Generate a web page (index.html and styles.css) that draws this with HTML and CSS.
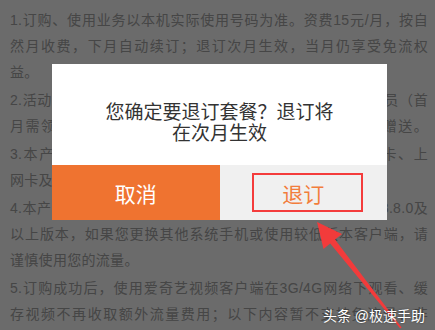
FILE: index.html
```html
<!DOCTYPE html>
<html lang="zh-CN">
<head>
  <meta charset="UTF-8">
  <meta name="viewport" content="width=device-width, initial-scale=1.0">
  <title>退订套餐</title>
  <link rel="stylesheet" href="styles.css">
</head>
<body>
  <div class="terms">
    <p>
      <span>1.订购、使用业务以本机实际使用号码为准。资费15元/月，按自</span>
      <span>然月收费，下月自动续订；退订次月生效，当月仍享受免流权</span>
      <span class="end">益。</span>
    </p>
    <p>
      <span>2.活动期间，新用户订购成功后即可获赠爱奇艺黄金VIP会员（首</span>
      <span>月需领取），激活后次月起每月1日系统将自动为您充值赠送。</span>
    </p>
    <p>
      <span>3.本产品仅限中国联通手机用户订购，不支持无线上网卡、上</span>
      <span class="end">网卡及物联网卡用户订购。</span>
    </p>
    <p>
      <span>4.本产品仅适用于安卓系统及iOS系统的爱奇艺视频客户端8.8.0及</span>
      <span>以上版本，如果您更换其他系统手机或使用较低版本客户端，请</span>
      <span class="end">谨慎使用您的流量。</span>
    </p>
    <p>
      <span>5.订购成功后，使用爱奇艺视频客户端在3G/4G网络下观看、缓</span>
      <span>存视频不再收取额外流量费用；以下内容暂不支持免流量：非</span>
    </p>
  </div>

  <div class="mask"></div>

  <div class="dialog">
    <div class="dialog-msg">您确定要退订套餐？退订将在次月生效</div>
    <div class="dialog-actions">
      <button class="btn btn-cancel">取消</button>
      <button class="btn btn-confirm">退订<span class="mark"></span></button>
    </div>
  </div>

  <!-- annotation arrow pointing at the confirm button -->
  <svg class="arrow" width="435" height="330" viewBox="0 0 435 330">
    <polygon fill="#f23b3b" points="317,222 342,234 335,239.5 401.6,327.6 400.2,328.4 330.2,243.6 323.5,249"/>
  </svg>

  <div class="watermark">头条 @极速手助</div>
</body>
</html>
```

FILE: styles.css
```css
body {
  margin: 0;
  width: 435px;
  height: 330px;
  overflow: hidden;
  position: relative;
  background-color: #fff;
  font-family: "Liberation Sans", "Noto Sans CJK SC", sans-serif;
}

.terms {
  width: 418px;
  padding: 7px 0 0 10px;
  color: #a6a6a6;
  font-size: 14px;
  line-height: 26px;
  letter-spacing: 0.3px;
}

.terms p {
  margin: 0 0 2px;
}

.terms span {
  display: block;
  white-space: nowrap;
  text-align: justify;
  text-align-last: justify;
}

.terms span.end {
  text-align-last: auto;
}

.mask {
  position: absolute;
  inset: 0;
  background-color: rgba(0, 0, 0, 0.58);
}

.dialog {
  position: absolute;
  left: 52px;
  top: 64px;
  width: 335px;
  background-color: #fff;
}

.dialog-msg {
  height: 101px;
  box-sizing: border-box;
  padding: 38px 46px 0;
  font-size: 19px;
  line-height: 21px;
  color: #333;
  text-align: center;
}

.dialog-actions {
  display: flex;
  height: 55px;
}

.btn {
  flex: 1;
  border: none;
  margin: 0;
  padding: 0;
  font-family: inherit;
  font-size: 21px;
  cursor: pointer;
}

.btn-cancel {
  background-color: #ef7330;
  color: #fff;
}

.btn-confirm {
  position: relative;
  background-color: #f0f0f0;
  color: #f27d3c;
}

.mark {
  position: absolute;
  left: 32px;
  top: 8px;
  width: 111px;
  height: 39px;
  box-sizing: border-box;
  border: 2px solid #f43c3c;
}

.arrow {
  position: absolute;
  left: 0;
  top: 0;
}

.watermark {
  position: absolute;
  right: 10px;
  bottom: 6px;
  color: #fff;
  font-size: 14px;
  line-height: 16px;
  text-shadow: 0 0 2px rgba(0, 0, 0, 0.5);
}
```
